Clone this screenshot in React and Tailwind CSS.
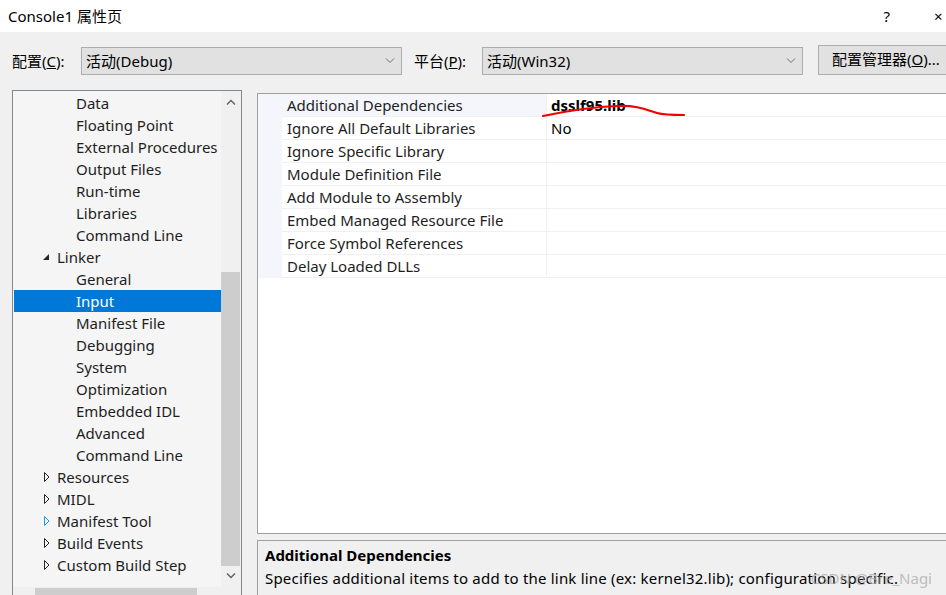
import React from "react";

const FONT = { fontFamily: '"Noto Sans", "Noto Sans CJK SC", sans-serif' };

const treeItems = [
  { label: "Data", level: 2 },
  { label: "Floating Point", level: 2 },
  { label: "External Procedures", level: 2 },
  { label: "Output Files", level: 2 },
  { label: "Run-time", level: 2 },
  { label: "Libraries", level: 2 },
  { label: "Command Line", level: 2 },
  { label: "Linker", level: 1, open: true },
  { label: "General", level: 2 },
  { label: "Input", level: 2, selected: true },
  { label: "Manifest File", level: 2 },
  { label: "Debugging", level: 2 },
  { label: "System", level: 2 },
  { label: "Optimization", level: 2 },
  { label: "Embedded IDL", level: 2 },
  { label: "Advanced", level: 2 },
  { label: "Command Line", level: 2 },
  { label: "Resources", level: 1 },
  { label: "MIDL", level: 1 },
  { label: "Manifest Tool", level: 1, hover: true },
  { label: "Build Events", level: 1 },
  { label: "Custom Build Step", level: 1 },
];

const props = [
  { name: "Additional Dependencies", value: "dsslf95.lib", bold: true },
  { name: "Ignore All Default Libraries", value: "No" },
  { name: "Ignore Specific Library", value: "" },
  { name: "Module Definition File", value: "" },
  { name: "Add Module to Assembly", value: "" },
  { name: "Embed Managed Resource File", value: "" },
  { name: "Force Symbol References", value: "" },
  { name: "Delay Loaded DLLs", value: "" },
];

function Chevron({ up = false }) {
  return (
    <svg width="10" height="6" viewBox="0 0 10 6">
      <path
        d={up ? "M1 5.5 L5 1.5 L9 5.5" : "M1 0.5 L5 4.5 L9 0.5"}
        fill="none"
        stroke="#606060"
        strokeWidth="1.4"
      />
    </svg>
  );
}

function Combo({ text }) {
  return (
    <div className="w-[321px] h-[28px] shrink-0 bg-[#e1e1e1] border border-[#adadad] flex items-center justify-between pl-[4px] pr-[6px]">
      <span className="text-[15px] text-black">{text}</span>
      <svg width="10" height="6" viewBox="0 0 10 6">
        <path d="M1 0.5 L5 4.5 L9 0.5" fill="none" stroke="#707070" strokeWidth="1" />
      </svg>
    </div>
  );
}

function Expander({ open, hover }) {
  if (open) {
    return (
      <svg width="8" height="8" viewBox="0 0 8 8">
        <path d="M7 1 L7 7 L1 7 Z" fill="#262626" />
      </svg>
    );
  }
  return (
    <svg width="6" height="10" viewBox="0 0 6 10">
      <path d="M0.5 0.5 L5 5 L0.5 9.5 Z" fill="none" stroke={hover ? "#1c97ea" : "#262626"} strokeWidth="1" />
    </svg>
  );
}

export default function App() {
  return (
    <div className="w-[946px] h-[595px] overflow-hidden bg-[#f0f0f0] flex flex-col text-black" style={FONT}>
      {/* title bar */}
      <div className="h-[32px] bg-white flex items-center justify-between pl-[8px] shrink-0">
        <span className="text-[15px]">Console1 属性页</span>
        <div className="flex items-center gap-[44px] text-[15px]">
          <span>?</span>
          <span className="w-[12px] overflow-hidden">×</span>
        </div>
      </div>

      {/* config row */}
      <div className="h-[58px] flex items-center pl-[12px] shrink-0 overflow-hidden">
        <span className="text-[15px] w-[69px] shrink-0">
          配置(<span className="underline">C</span>):
        </span>
        <Combo text="活动(Debug)" />
        <span className="text-[15px] ml-[12px] w-[68px] shrink-0">
          平台(<span className="underline">P</span>):
        </span>
        <Combo text="活动(Win32)" />
        <div className="ml-[15px] h-[30px] w-[140px] shrink-0 bg-[#e1e1e1] border border-[#adadad] flex items-center pl-[13px] mb-[3px]">
          <span className="text-[15px] whitespace-nowrap">
            配置管理器(<span className="underline">O</span>)...
          </span>
        </div>
      </div>

      {/* main area */}
      <div className="flex flex-1 min-h-0 pl-[12px] gap-[15px]">
        {/* tree */}
        <div className="w-[230px] h-[520px] border border-[#828790] bg-[#f5f5f5] flex flex-col shrink-0">
          <div className="flex h-[496px]">
            <div className="flex-1 pt-[1px] pl-[1px]">
              {treeItems.map((it, i) => (
                <div
                  key={i}
                  className={
                    "h-[22px] flex items-center text-[15px] whitespace-nowrap overflow-hidden " +
                    (it.selected ? "bg-[#0078d7] text-white" : "text-[#1e1e1e]")
                  }
                >
                  {it.level === 1 ? (
                    <>
                      <span className="w-[43px] flex justify-end pr-[7px]">
                        <Expander open={it.open} hover={it.hover} />
                      </span>
                      <span>{it.label}</span>
                    </>
                  ) : (
                    <span className="pl-[62px]">{it.label}</span>
                  )}
                </div>
              ))}
            </div>
            {/* vertical scrollbar */}
            <div className="w-[20px] bg-[#f0f0f0] flex flex-col items-center">
              <div className="h-[22px] flex items-center justify-center">
                <Chevron up />
              </div>
              <div className="flex-1 w-full pt-[159px]">
                <div className="w-[19px] h-[294px] bg-[#cdcdcd]" />
              </div>
              <div className="h-[22px] flex items-center justify-center">
                <Chevron />
              </div>
            </div>
          </div>
          {/* horizontal scrollbar */}
          <div className="h-[20px] bg-[#f0f0f0] flex items-center pl-[22px]">
            <div className="w-[162px] h-[19px] bg-[#cdcdcd]" />
          </div>
        </div>

        {/* right column */}
        <div className="flex-1 flex flex-col mt-[3px] min-w-0">
          <div className="h-[441px] border border-r-0 border-[#a0a0a0] bg-white relative">
            <div className="flex flex-col">
              {props.map((p, i) => (
                <div key={i} className="h-[23px] flex">
                  <div className="w-[24px] bg-[#f4f6fb]" />
                  <div
                    className={
                      "w-[264px] flex items-center pl-[5px] text-[15px] text-[#1e1e1e] border-b border-[#f0f0f0] " +
                      (i === 0 ? "bg-[#f4f6fb]" : "bg-white")
                    }
                  >
                    {p.name}
                  </div>
                  <div className="flex-1 flex items-center pl-[4px] text-[15px] border-b border-l border-[#f0f0f0]">
                    <span className={p.bold ? "font-bold" : ""}>{p.value}</span>
                  </div>
                </div>
              ))}
            </div>
            {/* red pen mark */}
            <svg className="absolute left-[284px] top-[8px]" width="150" height="20" viewBox="0 0 150 20">
              <path
                d="M1 14 C 20 10, 45 5, 75 4 C 95 3, 105 8, 115 11 C 122 13, 130 13, 142 13"
                fill="none"
                stroke="#f00000"
                strokeWidth="2.2"
                strokeLinecap="round"
              />
            </svg>
          </div>
          <div className="mt-[6px] flex-1 border-t border-l border-[#a0a0a0] bg-[#f0f0f0] pl-[7px] pt-[3px] relative">
            <div className="text-[15px] font-bold h-[23px] flex items-center">Additional Dependencies</div>
            <div className="text-[15px] h-[23px] flex items-center whitespace-nowrap tracking-[0.2px]">
              Specifies additional items to add to the link line (ex: kernel32.lib); configuration specific.
            </div>
            <span className="absolute right-[14px] top-[26px] text-[15px] text-[#a8a8a8] opacity-70">CSDN @Bre_Nagi</span>
          </div>
        </div>
      </div>
    </div>
  );
}
